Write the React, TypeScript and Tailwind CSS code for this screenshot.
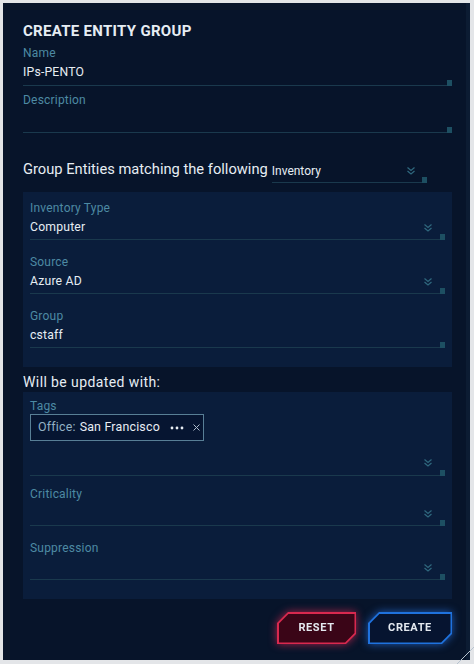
import React from "react";

const label = "text-[12px] leading-4 tracking-[0.2px] text-[#4d8aa3]";

function Chevrons() {
  return (
    <svg width="10" height="10" viewBox="0 0 10 10" fill="none" stroke="#2f687e" strokeWidth="1.2">
      <polyline points="1.5,1.5 5,4.5 8.5,1.5" />
      <polyline points="1.5,5 5,8 8.5,5" />
    </svg>
  );
}

function Field({
  name,
  value,
  select,
  className = "",
  rowClass = "h-[25px]",
}: {
  name: string;
  value?: string;
  select?: boolean;
  className?: string;
  rowClass?: string;
}) {
  return (
    <div className={className}>
      <div className={label}>{name}</div>
      <div className={`flex ${rowClass}`}>
        <div className="flex-1 flex items-center justify-between border-b border-[#1a394d]">
          <span className="text-[12.2px] leading-[18px] tracking-[0.2px] text-[#e6edf3] -mt-[2px]">{value}</span>
          {select && (
            <span className="mr-[7px] flex">
              <Chevrons />
            </span>
          )}
        </div>
        <div className="w-[5px] h-[6px] bg-[#1d4f62] self-end" />
      </div>
    </div>
  );
}

function ShapedButton({
  text,
  edge,
  fill,
  glow,
  width,
}: {
  text: string;
  edge: string;
  fill: string;
  glow: string;
  width: string;
}) {
  return (
    <div className={glow}>
      <div
        className={`${edge} ${width} h-[32px] p-[1.5px] [clip-path:polygon(11px_0,100%_0,100%_calc(100%-10px),calc(100%-10px)_100%,0_100%,0_11px)]`}
      >
        <div
          className={`${fill} h-full w-full flex items-center justify-center text-[11px] font-bold tracking-[0.6px] text-[#e4e9f0] [clip-path:polygon(10.4px_0,100%_0,100%_calc(100%-9.4px),calc(100%-9.4px)_100%,0_100%,0_10.4px)]`}
        >
          {text}
        </div>
      </div>
    </div>
  );
}

export default function App() {
  return (
    <div className="relative w-full h-[664px] bg-[#e3e5e8] pt-[3px] pl-[3px] pr-[4px] font-['Roboto',sans-serif]">
      <div className="h-[657px] bg-[#07142a] border-r-4 border-[#0c1c33] pl-5 pr-[14px] pt-[18px] text-[#e6edf3]">
        <h1 className="text-[15px] font-bold leading-5 tracking-[0.3px]">CREATE ENTITY GROUP</h1>

        <Field name="Name" value="IPs-PENTO" className="mt-1" />
        <Field name="Description" className="mt-[6px]" />

        <div className="mt-[26px] flex items-start">
          <span className="text-[14.7px] leading-5">Group Entities matching the following</span>
          <div className="ml-[4px] w-[155px] h-[24px] flex">
            <div className="flex-1 flex items-center justify-between border-b border-[#1a394d]">
              <span className="text-[12px] leading-4">Inventory</span>
              <span className="mr-[6px] flex">
                <Chevrons />
              </span>
            </div>
            <div className="w-[5px] h-[6px] bg-[#1d4f62] self-end" />
          </div>
        </div>

        <div className="mt-[9px] bg-[#0a1d3b] px-[7px] pt-2 pb-[19px]">
          <Field name="Inventory Type" value="Computer" select rowClass="h-[24px]" />
          <Field name="Source" value="Azure AD" select className="mt-[14px]" rowClass="h-[24px]" />
          <Field name="Group" value="cstaff" className="mt-[14px]" rowClass="h-[24px]" />
        </div>

        <div className="mt-[5px] text-[14px] leading-5 tracking-[0.4px]">Will be updated with:</div>

        <div className="bg-[#0a1d3b] px-[7px] pt-[6px] pb-[19px]">
          <div className={label}>Tags</div>
          <div className="flex">
            <div className="flex-1 border-b border-[#1a394d]">
              <div className="inline-flex items-center h-[27px] w-[174px] border border-[#587f96] bg-[#061531] pl-[7px] text-[12.4px] tracking-[0.2px]">
                <span className="text-[#93b1c4]">Office:</span>
                <span className="ml-[4px] text-[#e8eef4]">San Francisco</span>
                <svg className="ml-[10px]" width="14" height="4" viewBox="0 0 14 4" fill="#e8eef4">
                  <circle cx="2" cy="2" r="1.4" />
                  <circle cx="7" cy="2" r="1.4" />
                  <circle cx="12" cy="2" r="1.4" />
                </svg>
                <svg className="ml-[9px]" width="7" height="7" viewBox="0 0 7 7" stroke="#aebccb" strokeWidth="1">
                  <line x1="0.5" y1="0.5" x2="6.5" y2="6.5" />
                  <line x1="6.5" y1="0.5" x2="0.5" y2="6.5" />
                </svg>
              </div>
              <div className="h-[34px] pt-[10px] flex items-center justify-end pr-[7px]">
                <Chevrons />
              </div>
            </div>
            <div className="w-[5px] h-[6px] bg-[#1d4f62] self-end" />
          </div>
          <Field name="Criticality" select className="mt-[10px]" rowClass="h-[24px]" />
          <Field name="Suppression" select className="mt-[14px]" rowClass="h-[24px]" />
        </div>

        <div className="mt-[13px] flex justify-end gap-3">
          <ShapedButton
            text="RESET"
            edge="bg-[#d8294f]"
            fill="bg-[#3a0517]"
            glow="drop-shadow-[0_0_4px_rgba(232,40,84,0.7)]"
            width="w-[79px]"
          />
          <ShapedButton
            text="CREATE"
            edge="bg-[#1f72de]"
            fill="bg-[#061430]"
            glow="drop-shadow-[0_0_4px_rgba(40,120,240,0.7)]"
            width="w-[84px]"
          />
        </div>
      </div>
      <svg className="absolute right-0 bottom-0" width="18" height="18" viewBox="0 0 18 18">
        <line x1="1" y1="18" x2="18" y2="1" stroke="#b7c3cf" strokeWidth="1" />
      </svg>
    </div>
  );
}
